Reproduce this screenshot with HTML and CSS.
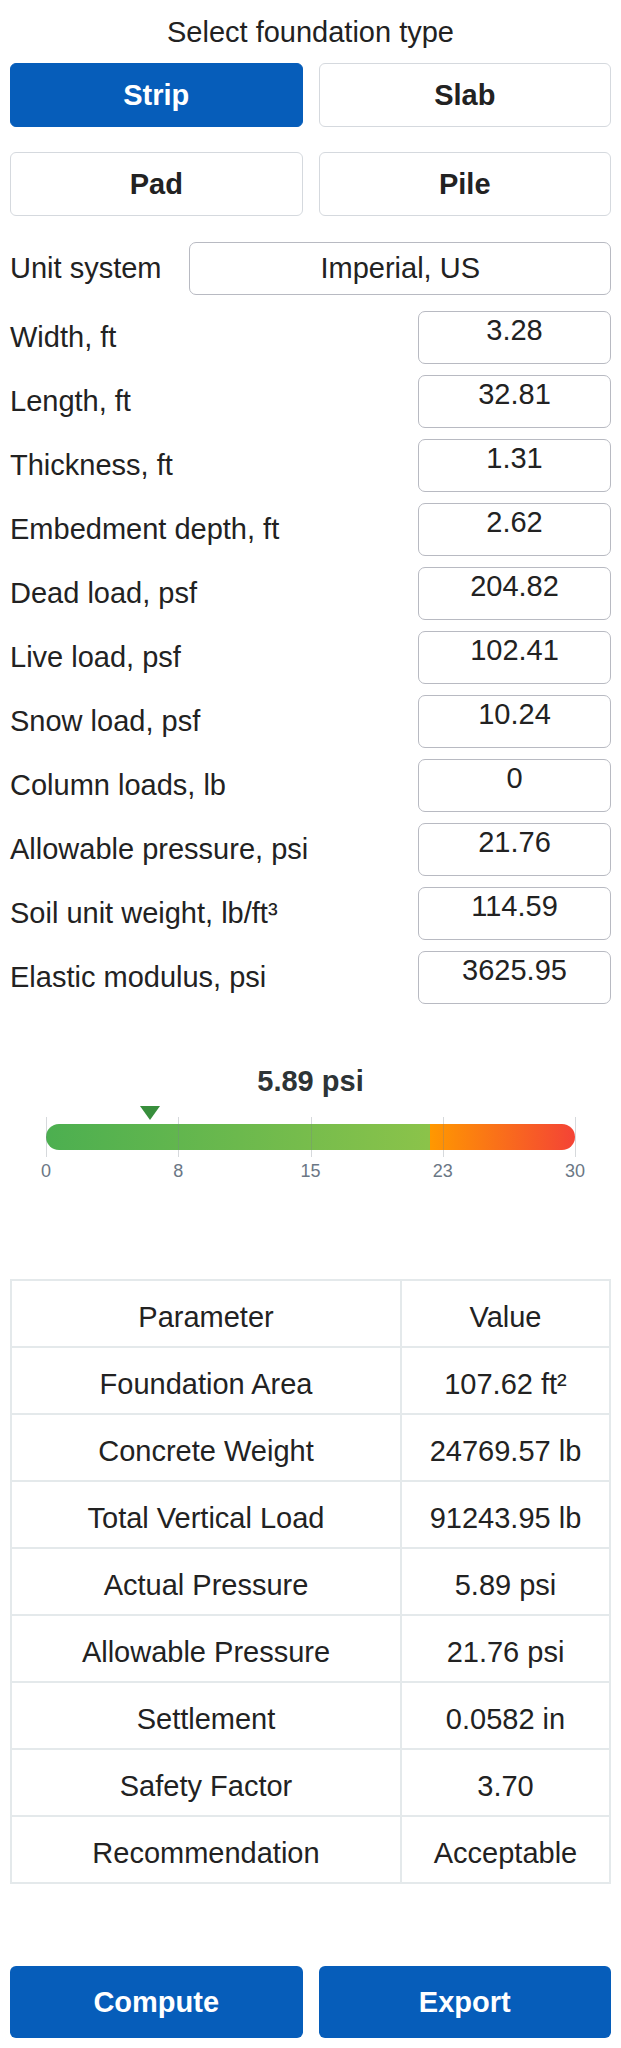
FILE: index.html
```html
<!DOCTYPE html>
<html lang="en">
<head>
  <meta charset="UTF-8">
  <meta name="viewport" content="width=device-width, initial-scale=1.0">
  <title>Foundation calculator</title>
  <link rel="stylesheet" href="styles.css">
</head>
<body>
  <div class="page">
    <div class="title">Select foundation type</div>
    <div class="types">
      <button class="type active">Strip</button>
      <button class="type">Slab</button>
      <button class="type">Pad</button>
      <button class="type">Pile</button>
    </div>

    <div class="unit-row">
      <span class="label">Unit system</span>
      <div class="select">Imperial, US</div>
    </div>

    <div class="fields">
      <div class="row"><span class="label">Width, ft</span><div class="input">3.28</div></div>
      <div class="row"><span class="label">Length, ft</span><div class="input">32.81</div></div>
      <div class="row"><span class="label">Thickness, ft</span><div class="input">1.31</div></div>
      <div class="row"><span class="label">Embedment depth, ft</span><div class="input">2.62</div></div>
      <div class="row"><span class="label">Dead load, psf</span><div class="input">204.82</div></div>
      <div class="row"><span class="label">Live load, psf</span><div class="input">102.41</div></div>
      <div class="row"><span class="label">Snow load, psf</span><div class="input">10.24</div></div>
      <div class="row"><span class="label">Column loads, lb</span><div class="input">0</div></div>
      <div class="row"><span class="label">Allowable pressure, psi</span><div class="input">21.76</div></div>
      <div class="row"><span class="label">Soil unit weight, lb/ft³</span><div class="input">114.59</div></div>
      <div class="row"><span class="label">Elastic modulus, psi</span><div class="input">3625.95</div></div>
    </div>

    <div class="gauge">
      <div class="gauge-value">5.89 psi</div>
      <div class="gauge-track">
        <div class="marker" style="left: 19.6%"></div>
        <div class="bar">
          <div class="bar-ok" style="width: 72.5%"></div>
          <div class="bar-bad"></div>
        </div>
        <div class="tick" style="left: 0%"></div>
        <div class="tick" style="left: 25%"></div>
        <div class="tick" style="left: 50%"></div>
        <div class="tick" style="left: 75%"></div>
        <div class="tick" style="left: 100%"></div>
      </div>
      <div class="scale">
        <span style="left: 0%">0</span>
        <span style="left: 25%">8</span>
        <span style="left: 50%">15</span>
        <span style="left: 75%">23</span>
        <span style="left: 100%">30</span>
      </div>
    </div>

    <table class="results">
      <tr><td>Parameter</td><td>Value</td></tr>
      <tr><td>Foundation Area</td><td>107.62 ft²</td></tr>
      <tr><td>Concrete Weight</td><td>24769.57 lb</td></tr>
      <tr><td>Total Vertical Load</td><td>91243.95 lb</td></tr>
      <tr><td>Actual Pressure</td><td>5.89 psi</td></tr>
      <tr><td>Allowable Pressure</td><td>21.76 psi</td></tr>
      <tr><td>Settlement</td><td>0.0582 in</td></tr>
      <tr><td>Safety Factor</td><td>3.70</td></tr>
      <tr><td>Recommendation</td><td>Acceptable</td></tr>
    </table>

    <div class="actions">
      <button class="action">Compute</button>
      <button class="action">Export</button>
    </div>
  </div>
</body>
</html>
```

FILE: styles.css
```css
body {
  margin: 0;
  background-color: #fff;
  font-family: "Liberation Sans", Arial, sans-serif;
  font-size: 29px;
  color: #222;
}
.page {
  padding: 16px 10px 10px;
}
.title {
  text-align: center;
  line-height: 33px;
  margin-bottom: 14px;
}
.types {
  display: grid;
  grid-template-columns: 1fr 1fr;
  grid-auto-rows: 64px;
  column-gap: 16px;
  row-gap: 25px;
}
.type, .action {
  font-family: inherit;
  font-size: 29px;
  font-weight: bold;
  border-radius: 6px;
  cursor: pointer;
}
.type {
  background-color: #fff;
  color: #222;
  border: 1px solid #d5d9de;
}
.type.active {
  background-color: #065dba;
  border-color: #065dba;
  color: #fff;
}
.unit-row {
  display: flex;
  align-items: center;
  margin-top: 26px;
  gap: 28px;
}
.select {
  flex: 1;
  height: 53px;
  box-sizing: border-box;
  border: 1px solid #b8bac2;
  border-radius: 7px;
  display: flex;
  align-items: center;
  justify-content: center;
}
.fields {
  display: flex;
  flex-direction: column;
  gap: 11px;
  margin-top: 16px;
}
.row {
  display: flex;
  align-items: center;
  justify-content: space-between;
}
.label {
  line-height: 33px;
}
.input {
  width: 193px;
  height: 53px;
  box-sizing: border-box;
  border: 1px solid #b8bac2;
  border-radius: 7px;
  padding-top: 2px;
  text-align: center;
  line-height: 33px;
}
.gauge {
  margin: 61px 36px 0;
}
.gauge-value {
  text-align: center;
  font-weight: bold;
  color: #2d3436;
  line-height: 33px;
}
.gauge-track {
  position: relative;
  height: 40px;
  margin-top: 19px;
}
.bar {
  position: absolute;
  left: 0;
  right: 0;
  top: 7px;
  height: 26px;
  border-radius: 13px;
  overflow: hidden;
  display: flex;
}
.bar-ok {
  background: linear-gradient(to right, #4caf50, #8bc34a);
}
.bar-bad {
  flex: 1;
  background: linear-gradient(to right, #ff9800, #f44336);
}
.tick {
  position: absolute;
  top: 0;
  bottom: 0;
  width: 1px;
  background-color: rgba(120, 130, 140, 0.3);
}
.marker {
  position: absolute;
  top: -11px;
  width: 0;
  height: 0;
  margin-left: -10px;
  border-left: 10px solid transparent;
  border-right: 10px solid transparent;
  border-top: 14px solid #388e3c;
}
.scale {
  position: relative;
  height: 24px;
  margin-top: 4px;
  font-size: 18px;
  color: #6b7785;
}
.scale span {
  position: absolute;
  top: 0;
  transform: translateX(-50%);
}
.results {
  margin-top: 94px;
  width: 100%;
  border-collapse: collapse;
}
.results td {
  height: 67px;
  padding: 7px 0 0;
  box-sizing: border-box;
  border: 2px solid #e4e9eb;
  text-align: center;
}
.results td:first-child {
  width: 390px;
}
.actions {
  display: grid;
  grid-template-columns: 1fr 1fr;
  column-gap: 16px;
  margin-top: 82px;
}
.action {
  height: 72px;
  background-color: #065dba;
  color: #fff;
  border: none;
}
```
